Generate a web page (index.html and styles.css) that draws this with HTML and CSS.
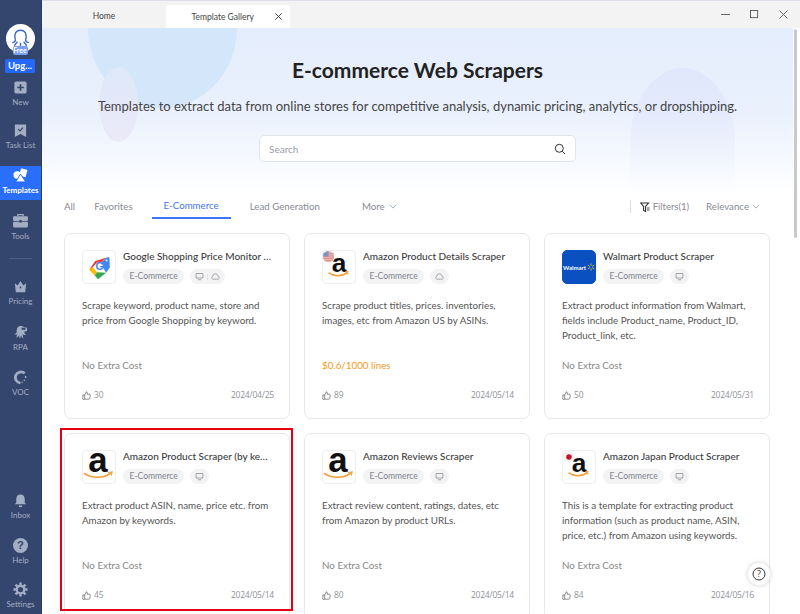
FILE: index.html
```html
<!DOCTYPE html>
<html lang="en">
<head>
<meta charset="utf-8">
<title>Template Gallery</title>
<link rel="stylesheet" href="styles.css">
</head>
<body>
<svg class="sprite" aria-hidden="true">
  <symbol id="i-like" viewBox="0 0 10 10"><path d="M3 4.3 4.8.9c.8 0 1.2.5 1.1 1.3L5.6 3.6h2.7c.6 0 1 .5.9 1.1l-.6 3.6c-.1.5-.4.8-.9.8H3zM3 4.3H1v5h2" fill="none" stroke="currentColor" stroke-width=".8" stroke-linejoin="round"/></symbol>
  <symbol id="i-pc" viewBox="0 0 10 10"><path d="M1.200 1.700h7.600v5H1.200zM3.200 8.600h3.600" fill="none" stroke="currentColor" stroke-width=".8"/></symbol>
  <symbol id="i-cloud" viewBox="0 0 10 10"><path d="M2.700 8C1.500 8 .8 7.200.8 6.200c0-.9.7-1.600 1.500-1.700C2.500 3 3.600 2 5 2s2.500 1 2.700 2.500c.8.100 1.500.8 1.500 1.700 0 1-.7 1.800-1.900 1.800z" fill="none" stroke="currentColor" stroke-width=".8"/></symbol>
  <symbol id="i-amazon" viewBox="0 0 34 34">
    <text x="16" y="22" text-anchor="middle" class="amz-a">a</text>
    <path d="M1 23.500c8 6 21 6 29-.3" fill="none" stroke="#f79c34" stroke-width="1.600"/>
    <path d="M26.500 22.800l4.500-.6-1 4" fill="none" stroke="#f79c34" stroke-width="1.200"/>
  </symbol>
  <symbol id="i-amazon-s" viewBox="0 0 34 34">
    <text x="17" y="22" text-anchor="middle" class="amz-s">a</text>
    <path d="M6 23c6 4.500 14 4.500 20-.3" fill="none" stroke="#f79c34" stroke-width="1.500"/>
    <path d="M23.500 22l3.200-.3-.7 3" fill="none" stroke="#f79c34" stroke-width="1"/>
  </symbol>
</svg>

<aside class="rail">
  <div class="profile">
    <div class="avatar">
      <svg class="avatar-art" viewBox="0 0 28 28"><path d="M9 15c-1.500-5 .5-9 5-9s6.500 4 5 9c-.3 1.500 1 2.500 3 3M9 15c.3 1.500-1 2.500-3 3M11 17l-3 4M17 17l3 4M14 18v4" fill="none" stroke="#3c66c9" stroke-width="1.300"/></svg>
      <span class="free">Free</span>
    </div>
    <div class="upgrade">Upg...</div>
  </div>
  <nav class="nav nav-top">
    <a class="nav-item"><svg class="nav-ic" viewBox="0 0 16 16"><rect x="1.500" y="1.500" width="13" height="13" rx="2" fill="#a3adc4"/><path d="M8 4.500v7M4.500 8h7" stroke="#34466d" stroke-width="1.800"/></svg><span>New</span></a>
    <a class="nav-item nav-task"><svg class="nav-ic" viewBox="0 0 16 16"><path d="M2 1.500h12v13.500L8 11.800 2 15z" fill="#a3adc4"/><path d="M5.500 6.500 7.500 8.500 10.500 5" fill="none" stroke="#34466d" stroke-width="1.300"/></svg><span>Task List</span></a>
    <a class="nav-item nav-active"><svg class="nav-ic" viewBox="0 0 16 16"><rect x="7.500" y="1" width="7" height="8" transform="rotate(15 11 5)" fill="#fff"/><circle cx="4.500" cy="7.500" r="4" fill="#fff"/><path d="M8 6.500 13.500 14.800H2.800z" fill="#fff" stroke="#2a6ffb" stroke-width="1"/></svg><span>Templates</span></a>
    <a class="nav-item nav-tools"><svg class="nav-ic nav-ic-lg" viewBox="0 0 16 16"><path d="M5.500 4V2.500h5V4" fill="none" stroke="#a3adc4" stroke-width="1.200"/><rect x="1" y="4" width="14" height="4.500" rx="1" fill="#a3adc4"/><rect x="1" y="9.200" width="14" height="5.300" rx="1" fill="#a3adc4"/><rect x="7" y="7.500" width="2" height="2.500" fill="#34466d"/></svg><span>Tools</span></a>
  </nav>
  <div class="rule"></div>
  <nav class="nav nav-mid">
    <a class="nav-item"><svg class="nav-ic" viewBox="0 0 16 16"><path d="M2 4.500 5 7l3-5 3 5 3-2.500-1 9.500H3z" fill="#a3adc4"/><path d="M8 7.500l1 1.500-1 1.500L7 9z" fill="#34466d"/></svg><span>Pricing</span></a>
    <a class="nav-item"><svg class="nav-ic" viewBox="0 0 16 16"><path d="M4 7c-.5-4 1.500-6 4.500-6 2 0 3 .8 3.500 1.500L15 3v3.500l-3 .7c-.3 1.300.5 2.300 2 3-1 .8-3 .5-3.800-.7l.8 4.500c-1 0-1.800-1-2.300-3l-1.200 3.500c-.8-.5-1-1.500-.7-3.500l-2.800 2.500c-.5-1 0-2.200 1-3.800-1 .8-2.500.8-3.500 0C3 9.500 4 8.500 4 7z" fill="#a3adc4"/><rect x="9" y="3" width="4.500" height="2" rx="1" fill="#34466d"/></svg><span>RPA</span></a>
    <a class="nav-item"><svg class="nav-ic" viewBox="0 0 16 16"><path d="M12.500 3.500A6 6 0 1 0 8 14" fill="none" stroke="#a3adc4" stroke-width="3"/><path d="M13.500 6.500v2M12.500 10.500l-1 1M10.200 13l-.9.500" fill="none" stroke="#a3adc4" stroke-width="1.500"/></svg><span>VOC</span></a>
  </nav>
  <nav class="nav nav-bottom">
    <a class="nav-item"><svg class="nav-ic" viewBox="0 0 16 16"><path d="M8 1.500c-3 0-4.500 2-4.500 5v3.500L2 12h12l-1.500-2V6.500c0-3-1.500-5-4.500-5z" fill="#a3adc4"/><path d="M6 13.200a2 2 0 0 0 4 0z" fill="#a3adc4"/></svg><span>Inbox</span></a>
    <a class="nav-item"><svg class="nav-ic" viewBox="0 0 16 16"><circle cx="8" cy="8" r="8" fill="#a3adc4"/><text x="8" y="12" text-anchor="middle" class="help-q">?</text></svg><span>Help</span></a>
    <a class="nav-item"><svg class="nav-ic" viewBox="0 0 16 16"><g stroke="#a3adc4" stroke-width="2.600"><path d="M8 .5v15M.5 8h15M2.700 2.700l10.600 10.600M13.300 2.700 2.700 13.300"/></g><circle cx="8" cy="8" r="4" fill="#34466d" stroke="#a3adc4" stroke-width="2.400"/></svg><span>Settings</span></a>
  </nav>
</aside>

<div class="app">
  <header class="titlebar">
    <div class="tab-home">Home</div>
    <div class="tab-open"><span>Template Gallery</span><svg class="tab-x" viewBox="0 0 10 10"><path d="M1.500 1.500l7 7M8.500 1.500l-7 7" stroke="#333" stroke-width="1"/></svg></div>
    <div class="win">
      <svg viewBox="0 0 10 10"><path d="M0 5h10" stroke="#555" stroke-width="1"/></svg>
      <svg viewBox="0 0 10 10"><rect x=".5" y=".5" width="8" height="8" fill="none" stroke="#555" stroke-width="1"/></svg>
      <svg viewBox="0 0 10 10"><path d="M.5.500l9 9M9.500.500l-9 9" stroke="#555" stroke-width="1"/></svg>
    </div>
  </header>

  <div class="body">
    <main class="content">
      <section class="hero">
        <div class="blob blob-a"></div>
        <div class="blob blob-b"></div>
        <div class="blob blob-c"></div>
        <h1>E-commerce Web Scrapers</h1>
        <p class="lead">Templates to extract data from online stores for competitive analysis, dynamic pricing, analytics, or dropshipping.</p>
        <div class="search"><span>Search</span><svg viewBox="0 0 12 12"><circle cx="5.300" cy="5.300" r="4" fill="none" stroke="#333" stroke-width="1"/><path d="M8.300 8.300 11 11" stroke="#333" stroke-width="1"/></svg></div>
      </section>

      <div class="filters">
        <a class="cat">All</a>
        <a class="cat">Favorites</a>
        <a class="cat cat-active">E-Commerce</a>
        <a class="cat cat-lead">Lead Generation</a>
        <a class="cat">More<svg class="chev" viewBox="0 0 10 6"><path d="M1 1l4 4 4-4" fill="none" stroke="currentColor" stroke-width=".9"/></svg></a>
        <div class="filter-right">
          <a class="filter-btn"><svg class="funnel" viewBox="0 0 10 10"><path d="M.8 1h7.700L5.600 4.500v5L3.600 8.500v-4z" fill="none" stroke="#333" stroke-width="1.100"/><path d="M7 6h2.500M7 8h2.500" stroke="#333" stroke-width=".9"/></svg>Filters(1)</a>
          <a class="sort">Relevance<svg class="chev" viewBox="0 0 10 6"><path d="M1 1l4 4 4-4" fill="none" stroke="currentColor" stroke-width=".9"/></svg></a>
        </div>
      </div>

      <div class="grid">
        <article class="card">
          <div class="card-head">
            <div class="logo"><svg viewBox="0 0 34 34"><path d="M13 10.500 27 6.500l1.500 11L16 30 6.500 20z" fill="#fff"/><path d="M13 10.500 24.500 7.200 20 12H15.500L10 17.500l-3.500 2.500z" fill="#ea4335"/><path d="M6.500 20 10 17 15 22.500 12.500 26z" fill="#fbbc04"/><path d="M12.500 26 15 22.500l9.500.5-8.500 7z" fill="#34a853"/><path d="M24.500 7.200 28 6.500 28.500 17.500 24.500 23l-3-5L20 12z" fill="#4285f4"/><text x="17.500" y="20.500" text-anchor="middle" class="g-mark">G</text><circle cx="25" cy="10" r="1" fill="#fff"/></svg></div>
            <div class="head-text">
              <h2>Google Shopping Price Monitor Scraper</h2>
              <div class="tags"><span class="tag">E-Commerce</span><span class="tag tag-ic"><svg><use href="#i-pc"/></svg><i></i><svg><use href="#i-cloud"/></svg></span></div>
            </div>
          </div>
          <p class="desc">Scrape keyword, product name, store and price from Google Shopping by keyword.</p>
          <div class="cost">No Extra Cost</div>
          <div class="meta"><span class="likes"><svg><use href="#i-like"/></svg>30</span><time>2024/04/25</time></div>
        </article>

        <article class="card">
          <div class="card-head">
            <div class="logo"><svg viewBox="0 0 34 34"><use href="#i-amazon-s"/></svg><svg class="flag" viewBox="0 0 12 12"><circle cx="6" cy="6" r="6" fill="#eeb4ae"/><path d="M0 3h12M0 5.500h12M0 8h12M1.500 10.500h9" stroke="#d98b88" stroke-width="1"/><path d="M6 0A6 6 0 0 0 0 6h6z" fill="#7d94c4"/></svg></div>
            <div class="head-text">
              <h2>Amazon Product Details Scraper</h2>
              <div class="tags"><span class="tag">E-Commerce</span><span class="tag tag-ic"><svg><use href="#i-cloud"/></svg></span></div>
            </div>
          </div>
          <p class="desc">Scrape product titles, prices. inventories, images, etc from Amazon US by ASINs.</p>
          <div class="cost cost-paid">$0.6/1000 lines</div>
          <div class="meta"><span class="likes"><svg><use href="#i-like"/></svg>89</span><time>2024/05/14</time></div>
        </article>

        <article class="card">
          <div class="card-head">
            <div class="logo logo-walmart"><span>Walmart</span><svg viewBox="0 0 10 10"><path d="M5 .5v3M5 6.500v3M1 2.700l2.600 1.500M9 2.700 6.400 4.200M1 7.300l2.600-1.500M9 7.300 6.400 5.800" stroke="#ffc220" stroke-width="1"/></svg></div>
            <div class="head-text">
              <h2>Walmart Product Scraper</h2>
              <div class="tags"><span class="tag">E-Commerce</span><span class="tag tag-ic"><svg><use href="#i-pc"/></svg></span></div>
            </div>
          </div>
          <p class="desc">Extract product information from Walmart, fields include Product_name, Product_ID, Product_link, etc.</p>
          <div class="cost">No Extra Cost</div>
          <div class="meta"><span class="likes"><svg><use href="#i-like"/></svg>50</span><time>2024/05/31</time></div>
        </article>

        <article class="card">
          <div class="marked"></div>
          <div class="card-head">
            <div class="logo"><svg viewBox="0 0 34 34"><use href="#i-amazon"/></svg></div>
            <div class="head-text">
              <h2>Amazon Product Scraper (by keywords)</h2>
              <div class="tags"><span class="tag">E-Commerce</span><span class="tag tag-ic"><svg><use href="#i-pc"/></svg></span></div>
            </div>
          </div>
          <p class="desc">Extract product ASIN, name, price etc. from Amazon by keywords.</p>
          <div class="cost">No Extra Cost</div>
          <div class="meta"><span class="likes"><svg><use href="#i-like"/></svg>45</span><time>2024/05/14</time></div>
        </article>

        <article class="card">
          <div class="card-head">
            <div class="logo"><svg viewBox="0 0 34 34"><use href="#i-amazon"/></svg></div>
            <div class="head-text">
              <h2>Amazon Reviews Scraper</h2>
              <div class="tags"><span class="tag">E-Commerce</span><span class="tag tag-ic"><svg><use href="#i-pc"/></svg></span></div>
            </div>
          </div>
          <p class="desc">Extract review content, ratings, dates, etc from Amazon by product URLs.</p>
          <div class="cost">No Extra Cost</div>
          <div class="meta"><span class="likes"><svg><use href="#i-like"/></svg>80</span><time>2024/05/14</time></div>
        </article>

        <article class="card">
          <div class="card-head">
            <div class="logo"><svg viewBox="0 0 34 34"><use href="#i-amazon-s"/></svg><svg class="flag" viewBox="0 0 12 12"><circle cx="6" cy="6" r="6" fill="#f4f1f1"/><circle cx="6.500" cy="6.500" r="3" fill="#c8102e"/></svg></div>
            <div class="head-text">
              <h2>Amazon Japan Product Scraper</h2>
              <div class="tags"><span class="tag">E-Commerce</span><span class="tag tag-ic"><svg><use href="#i-pc"/></svg></span></div>
            </div>
          </div>
          <p class="desc">This is a template for extracting product information (such as product name, ASIN, price, etc.) from Amazon using keywords.</p>
          <div class="cost">No Extra Cost</div>
          <div class="meta"><span class="likes"><svg><use href="#i-like"/></svg>84</span><time>2024/05/16</time></div>
        </article>
      </div>

      <button class="help-fab" type="button"><svg viewBox="0 0 14 14"><circle cx="7" cy="7" r="6" fill="none" stroke="#333" stroke-width="1"/><text x="7" y="10" text-anchor="middle" class="fab-q">?</text></svg></button>
    </main>
    <div class="scroll"><div class="thumb"></div></div>
  </div>
</div>
</body>
</html>
```

FILE: styles.css
```css
* { box-sizing: border-box; }
html, body { height: 100%; }
body {
  margin: 0;
  display: flex;
  height: 614px;
  overflow: hidden;
  background: #fff;
  font-family: Lato, "Noto Sans", sans-serif;
  color: #333;
}
.sprite { display: none; }
svg { display: block; }
h1, h2, p { margin: 0; font-weight: normal; }

/* rail */
.rail {
  width: 42px;
  flex: none;
  display: flex;
  flex-direction: column;
  background: #34466d;
  border-right: 1px solid #2c3c60;
  color: #a3adc4;
  font-size: 8px;
}
.profile { padding-top: 24px; display: flex; flex-direction: column; align-items: center; }
.avatar { position: relative; width: 29px; height: 29px; border-radius: 50%; background: #fff; margin-right: 1px; }
.avatar-art { width: 29px; height: 29px; }
.free {
  position: absolute;
  left: 7px;
  top: 22px;
  width: 15px;
  height: 9px;
  background: #7ba0f0;
  border-radius: 2px;
  color: #fff;
  font-size: 7px;
  line-height: 9px;
  text-align: center;
  font-weight: 700;
}
.upgrade {
  margin-top: 6px;
  width: 30px;
  height: 14px;
  background: #2468fa;
  border-radius: 2px;
  color: #fff;
  font-size: 9.500px;
  font-weight: 700;
  line-height: 14px;
  text-align: center;
  margin-right: 1px;
}
.nav { display: flex; flex-direction: column; }
.nav-top { margin-top: 5px; gap: 10px; }
.nav-mid { margin-top: 18px; gap: 11.500px; }
.nav-bottom { margin-top: auto; gap: 10.500px; }
.nav-item {
  height: 34px;
  display: flex;
  flex-direction: column;
  align-items: center;
  justify-content: flex-end;
  padding-bottom: 5px;
  gap: 2px;
  line-height: 10px;
}
.nav-task { padding-bottom: 6px; }
.nav-tools { padding-bottom: 3px; }
.nav-ic { width: 15px; height: 15px; }
.nav-ic-lg { width: 17px; height: 17px; }
.nav-active { background: #2a6ffb; color: #fff; font-weight: 700; }
.rule { margin: 14px 9px 0; height: 1px; background: #4d5e84; }
.help-q { font: 700 12px "Liberation Sans", sans-serif; fill: #34466d; }

/* title bar */
.app { flex: 1; min-width: 0; display: flex; flex-direction: column; }
.titlebar {
  height: 28px;
  flex: none;
  display: flex;
  align-items: flex-end;
  background: #f3f3f3;
  border-top: 1px solid #dedee6;
  font-size: 8.500px;
  color: #444;
}
.tab-home { width: 124px; height: 23px; line-height: 23px; text-align: center; }
.tab-open {
  width: 124px;
  height: 23px;
  background: #fff;
  border-radius: 4px 4px 0 0;
  display: flex;
  align-items: center;
  justify-content: flex-end;
  gap: 20px;
  padding-right: 7px;
}
.tab-x { width: 9px; height: 9px; }
.win {
  margin-left: auto;
  align-self: center;
  display: flex;
  gap: 20px;
  padding-right: 12px;
}
.win svg { width: 9px; height: 9px; }

/* main */
.body { flex: 1; min-height: 0; display: flex; }
.content { flex: 1; min-width: 0; position: relative; overflow: hidden; }
.scroll { width: 7px; flex: none; padding: 1px 3px 0 1px; background: #fff; }
.thumb { height: 209px; background: #c9c9c9; border-radius: 2px; }

.hero {
  position: relative;
  height: 168px;
  padding-top: 30px;
  background: linear-gradient(#e4edfc 0%, #eaf1fd 50%, #fff 100%);
  overflow: hidden;
  text-align: center;
}
.hero > h1, .hero > p, .hero > .search { position: relative; }
.blob { position: absolute; }
.blob-a { left: 46px; top: -80px; width: 149px; height: 160px; border-radius: 50%; background: #d3e6fa; }
.blob-b { left: 57px; top: 39px; width: 39px; height: 75px; border-radius: 50%; background: linear-gradient(#dde8f9, #ece9f8); }
.blob-c { left: 588px; top: 40px; width: 105px; height: 125px; border-radius: 50% 50% 0 0 / 60% 60% 0 0; background: linear-gradient(#e1e7fb, rgba(232, 236, 252, 0) 95%); }
h1 { font-size: 21px; line-height: 24px; font-weight: 700; color: #222; }
.lead { margin-top: 15px; font-size: 13px; line-height: 18px; color: #444; white-space: nowrap; }
.search {
  margin: 20px 0 0 217px;
  width: 317px;
  height: 27px;
  display: flex;
  align-items: center;
  justify-content: space-between;
  padding: 0 9px;
  background: #fff;
  border: 1px solid #e2e5ea;
  border-radius: 5px;
  font-size: 10px;
  color: #9a9ea6;
}
.search svg { width: 12px; height: 12px; }

.filters {
  display: flex;
  align-items: flex-start;
  gap: 19px;
  padding: 0 0 0 22px;
  height: 37px;
  font-size: 9.700px;
  line-height: 13px;
  color: #878b93;
}
.cat { display: flex; align-items: center; height: 23px; padding-bottom: 2px; }
.cat-active { padding: 0 12px 2px 12px; color: #3f74f6; border-bottom: 2px solid #3f74f6; }
.cat-lead { margin-right: 23px; }
.chev { width: 8px; height: 5px; margin-left: 4px; }
.filter-right { margin-left: auto; display: flex; align-items: center; gap: 17px; height: 21px; padding-right: 33px; }
.filter-btn { display: flex; align-items: center; gap: 3px; padding-left: 9px; border-left: 1px solid #ddd; height: 13px; font-size: 9.500px; }
.funnel { width: 10px; height: 10px; }
.sort { display: flex; align-items: center; }
.sort .chev { margin-left: 3px; }

/* cards */
.grid {
  display: grid;
  grid-template-columns: repeat(3, 226px);
  grid-auto-rows: 186px;
  gap: 14px;
  padding-left: 22px;
}
.card {
  position: relative;
  display: flex;
  flex-direction: column;
  padding: 16px 17px 0;
  background: #fff;
  border: 1px solid #e6e8ea;
  border-radius: 7px;
}
.marked { position: absolute; left: -5px; top: -6px; width: 233px; height: 183px; border: 2px solid #e60012; }
.card-head { display: flex; gap: 7px; }
.logo { position: relative; flex: none; width: 34px; height: 34px; border: 1px solid #eeeeef; border-radius: 4px; background: #fff; }
.logo > svg { width: 32px; height: 32px; }
.logo .flag { position: absolute; left: 0; top: 0; width: 11px; height: 11px; }
.amz-a { font: 700 37px "Liberation Sans", sans-serif; fill: #111; }
.amz-s { font: 700 28px "Liberation Sans", sans-serif; fill: #111; }
.g-mark { font: 700 11px "Liberation Sans", sans-serif; fill: #4285f4; }
.logo-walmart { display: flex; align-items: center; justify-content: center; gap: 1px; background: #0b50c0; border-color: #0b50c0; border-radius: 5px; color: #fff; font-size: 6px; font-weight: 700; }
.logo-walmart > svg { width: 8px; height: 8px; }
.head-text { flex: 1; min-width: 0; }
h2 {
  font-size: 10px;
  line-height: 13px;
  font-weight: 500;
  color: #3c3c3c;
  white-space: nowrap;
  overflow: hidden;
  text-overflow: ellipsis;
}
.tags { display: flex; gap: 6px; margin-top: 6px; }
.tag { height: 15px; padding: 0 6.500px; border-radius: 8px; background: #f3f3f4; color: #80848c; font-size: 8.500px; line-height: 15px; }
.tag-ic { display: flex; align-items: center; gap: 3px; padding: 0 5px; }
.tag-ic svg { width: 9px; height: 9px; }
.tag-ic i { width: 1px; height: 6px; background: #e0e0e0; }
.desc { margin-top: 14px; height: 45px; font-size: 9.800px; line-height: 15px; color: #555; }
.cost { margin-top: 15px; font-size: 9.800px; line-height: 15px; color: #888; }
.cost-paid { color: #f59a23; }
.meta { margin: 15px -2px 0 0; display: flex; justify-content: space-between; align-items: center; font-family: "Open Sans", sans-serif; font-size: 8.500px; letter-spacing: -.2px; line-height: 14px; color: #909399; }
.likes { display: flex; align-items: center; gap: 3px; }
.likes svg { width: 9px; height: 9px; color: #666; }

.help-fab {
  position: absolute;
  left: 705px;
  top: 534px;
  width: 24px;
  height: 24px;
  padding: 0;
  display: flex;
  align-items: center;
  justify-content: center;
  background: #fff;
  border: 1px solid #eee;
  border-radius: 50%;
  box-shadow: 0 0 4px rgba(0, 0, 0, .15);
}
.help-fab svg { width: 14px; height: 14px; }
.fab-q { font: 400 9px "Open Sans", sans-serif; fill: #333; }
```
